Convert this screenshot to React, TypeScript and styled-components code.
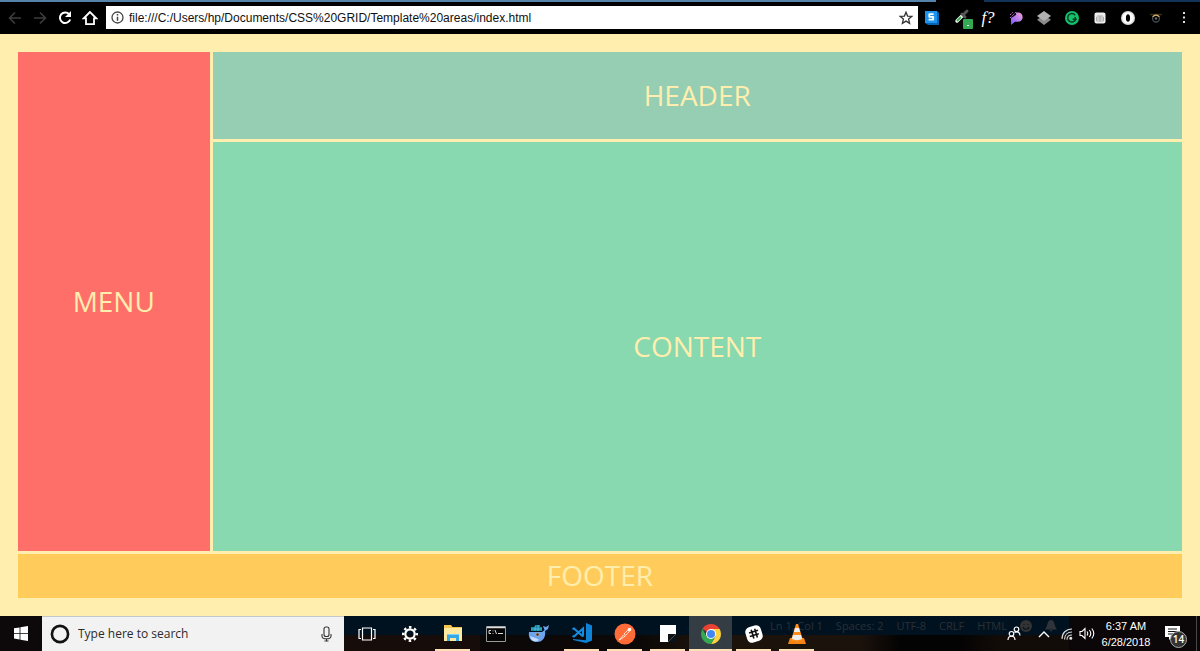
import React from 'react';
import styled, { createGlobalStyle, css } from 'styled-components';

const GlobalStyle = createGlobalStyle`
  *, *::before, *::after { box-sizing: border-box; }
  body { margin: 0; background: #ffeead; font-family: "Open Sans", "Noto Sans", sans-serif; }
  button, input { font: inherit; border: 0; padding: 0; margin: 0; background: none; color: inherit; }
  svg { display: block; }
`;

const Screen = styled.div`
  display: flex;
  flex-direction: column;
  min-height: 100vh;
`;

const TabStrip = styled.div`
  height: 2px;
  background: linear-gradient(90deg, #5682ab 0 78%, #000 78% 82%, #123459 82%);
`;

const Toolbar = styled.header`
  display: flex;
  align-items: center;
  height: 32px;
  padding: 4px 2px 5px;
  background: #000;
`;

const ToolButton = styled.button<{ $width: number }>`
  display: flex;
  flex: none;
  align-items: center;
  justify-content: center;
  width: ${(p) => p.$width}px;
  height: 23px;
`;

const NavButtons = styled.nav`
  display: flex;
  margin-right: 4px;
`;

const Extensions = styled.div`
  display: flex;
`;

const AddressBar = styled.div`
  display: flex;
  flex: 1;
  align-items: center;
  height: 23px;
  padding-left: 5px;
  background: #fff;
  color: #111;
`;

const AddressInput = styled.input`
  flex: 1;
  min-width: 0;
  height: 23px;
  margin-left: 5px;
  font-family: "Liberation Sans", sans-serif;
  font-size: 12px;
  outline: 0;
`;

const FunctionMark = styled.span`
  color: #fff;
  font-family: "Liberation Serif", serif;
  font-size: 17px;
  font-style: italic;
  line-height: 20px;
`;

const Page = styled.main`
  display: grid;
  flex: 1;
  grid-template-columns: repeat(12, 1fr);
  grid-template-rows: 87px 1fr 44px;
  gap: 3px;
  padding: 18px;
  background: #ffeead;
  grid-template-areas:
    "m m h h h h h h h h h h"
    "m m c c c c c c c c c c"
    "f f f f f f f f f f f f";
`;

const Area = styled.section<{ $area: string; $color: string }>`
  display: flex;
  grid-area: ${(p) => p.$area};
  align-items: center;
  justify-content: center;
  padding-bottom: 2px;
  background: ${(p) => p.$color};
  color: #ffeead;
  font-size: 28px;
  font-weight: 500;
  line-height: 36px;
`;

const Taskbar = styled.footer`
  position: relative;
  display: flex;
  height: 35px;
  background:
    linear-gradient(90deg, #0d090b 0 42px, transparent 42px calc(100% - 131px), #0b0708 calc(100% - 131px)),
    linear-gradient(#00121f 0 19px, transparent 19px),
    linear-gradient(90deg, #160c09 0 480px, #0b0807 480px 640px, #1b120c 700px 860px, #040303 900px 960px, #120c08 1000px);
  color: #fff;
`;

const StartButton = styled.button`
  display: flex;
  flex: none;
  align-items: center;
  justify-content: center;
  width: 42px;
`;

const SearchBox = styled.label`
  display: flex;
  flex: none;
  align-items: center;
  width: 302px;
  padding: 0 12px 0 8px;
  border-top: 1px solid #c3c8cc;
  background: #f2f2f2;
  color: #222;
`;

const SearchInput = styled.input`
  flex: 1;
  min-width: 0;
  margin-left: 8px;
  font-size: 12px;
  line-height: 20px;
  outline: 0;
  &::placeholder { color: #2b2b2b; opacity: 1; }
`;

const Apps = styled.nav`
  display: flex;
  z-index: 1;
  margin-left: 1px;
`;

const AppButton = styled.button<{ $open?: boolean; $active?: boolean }>`
  display: flex;
  position: relative;
  align-items: center;
  justify-content: center;
  width: 43px;
  background: ${(p) => (p.$active ? '#343d44' : 'transparent')};
  ${(p) =>
    p.$open &&
    css`
      &::after {
        content: '';
        position: absolute;
        bottom: 0;
        left: ${p.$active ? 0 : 4}px;
        right: ${p.$active ? 0 : 4}px;
        height: 2px;
        background: #ffdfb5;
      }
    `}
`;

const GhostStatus = styled.div`
  position: absolute;
  top: 0;
  right: 143px;
  display: flex;
  align-items: center;
  gap: 13px;
  height: 19px;
  color: #2a3036;
  font-size: 11px;
  white-space: nowrap;
`;

const Tray = styled.div`
  display: flex;
  z-index: 1;
  align-items: center;
  margin-left: auto;
`;

const TrayButton = styled.button<{ $width: number }>`
  display: flex;
  align-items: center;
  justify-content: center;
  width: ${(p) => p.$width}px;
  height: 35px;
`;

const Clock = styled.time`
  width: 58px;
  font-family: "Liberation Sans", sans-serif;
  font-size: 11px;
  line-height: 16px;
  text-align: center;
  white-space: nowrap;
`;

const NotifyButton = styled(TrayButton)`
  position: relative;
  margin-left: 4px;
`;

const ShowDesktop = styled.button`
  width: 4px;
  height: 35px;
  margin-left: 11px;
  border-left: 1px solid #4a4848;
`;

const Badge = styled.span`
  position: absolute;
  right: -2px;
  bottom: 3px;
  width: 17px;
  height: 17px;
  border: 1px solid #aaa;
  border-radius: 50%;
  background: #333;
  font-size: 10px;
  font-weight: 600;
  line-height: 15px;
  text-align: center;
`;

const Back = () => (
  <svg width="14" height="14" viewBox="0 0 14 14" fill="none" stroke="#3d3d3d" strokeWidth="1.6">
    <path d="M13 7H2M7 1.5 1.5 7 7 12.5" />
  </svg>
);
const Forward = () => (
  <svg width="14" height="14" viewBox="0 0 14 14" fill="none" stroke="#3d3d3d" strokeWidth="1.6">
    <path d="M1 7h11M7 1.5 12.5 7 7 12.5" />
  </svg>
);
const Reload = () => (
  <svg width="14" height="14" viewBox="0 0 14 14" fill="none" stroke="#fff" strokeWidth="2">
    <path d="M11.2 3.2A5.3 5.3 0 1 0 12.2 8.5" />
    <path d="M13 0v6H7z" fill="#fff" stroke="none" />
  </svg>
);
const Home = () => (
  <svg width="16" height="16" viewBox="0 0 16 16" fill="none" stroke="#fff" strokeWidth="1.8">
    <path d="M8 2 1.8 8.3H4v5.9h8V8.3h2.2z" />
  </svg>
);
const Info = () => (
  <svg width="13" height="13" viewBox="0 0 13 13" fill="none" stroke="#444" strokeWidth="1.3">
    <circle cx="6.5" cy="6.5" r="5.5" />
    <path d="M6.5 5.7v4M6.5 3v1.5" strokeWidth="1.5" />
  </svg>
);
const Star = () => (
  <svg width="14" height="14" viewBox="0 0 14 14" fill="none" stroke="#333" strokeWidth="1.3">
    <path d="m7 1.2 1.6 3.9 4.2.3-3.2 2.7 1 4.2L7 10.1l-3.6 2.2 1-4.2-3.2-2.7 4.2-.3z" />
  </svg>
);
const Stylish = () => (
  <svg width="14" height="14" viewBox="0 0 14 14">
    <path d="M0 0h12l2 2v12H3l-3-2z" fill="#0a63b0" />
    <path d="M0 0h12v12H0z" fill="#1b95f0" />
    <path d="M8.6 3.2H4.3v2.6h3.9v2.8H3.6" fill="none" stroke="#fff" strokeWidth="1.8" strokeLinejoin="round" />
  </svg>
);
const Dropper = () => (
  <svg width="28" height="23" viewBox="0 0 28 23">
    <path d="m11 15 6-6" stroke="#fff" strokeWidth="3.4" strokeLinecap="round" />
    <path d="m11 15 4-4" stroke="#39a957" strokeWidth="2" />
    <path d="m16 8 3 3M17 9l4-4" stroke="#555" strokeWidth="3" strokeLinecap="round" />
    <rect x="17" y="13" width="10" height="10" rx="1" fill="#34a853" />
    <path d="M21 19h2v1h-2z" fill="#d7f0dc" />
  </svg>
);
const Pixel = () => (
  <svg width="14" height="14" viewBox="0 0 14 14">
    <defs>
      <linearGradient id="violet" x1="0" y1="1" x2="1" y2="0">
        <stop stopColor="#7657ff" />
        <stop offset="1" stopColor="#f7a6d6" />
      </linearGradient>
    </defs>
    <path d="M7 1.5h2a4.6 4.6 0 0 1 0 9.3H6L2 14V7l5-3z" fill="url(#violet)" />
    <path d="m1 4 3-3M1 7l6-6M2 9l6-6" stroke="#c269dc" strokeWidth="1" strokeDasharray="1.5 .8" />
  </svg>
);
const Layers = () => (
  <svg width="16" height="14" viewBox="0 0 16 14">
    <path d="m8 4 7 4.8L8 14 1 8.8z" fill="#8a8a8a" />
    <path d="m8 0 7 5-7 5-7-5z" fill="#b2b2b2" />
  </svg>
);
const Grammar = () => (
  <svg width="14" height="14" viewBox="0 0 14 14" fill="none">
    <circle cx="7" cy="7" r="7" fill="#15c26b" />
    <path d="M10.2 4.2a4.2 4.2 0 1 0 .6 4H7.6M9.8 6l1.2 2.3L9.6 10" stroke="#063d25" strokeWidth="1.5" />
  </svg>
);
const WhiteTile = () => (
  <svg width="12" height="12" viewBox="0 0 12 12" fill="none">
    <rect x=".5" y=".5" width="11" height="11" rx="2" fill="#eee" />
    <path d="M2.5 5h7v4h-7zM6 3v7M3.5 3l1.5 1.5M8.5 3 7 4.5M2.5 7h7" stroke="#aaa" />
  </svg>
);
const Oval = () => (
  <svg width="14" height="14" viewBox="0 0 14 14">
    <circle cx="7" cy="7" r="7" fill="#ddd" />
    <circle cx="7" cy="7" r="5.5" fill="#fff" />
    <ellipse cx="7" cy="7" rx="2.1" ry="3.8" fill="#000" />
  </svg>
);
const Eye = () => (
  <svg width="14" height="12" viewBox="0 0 14 12" fill="none">
    <path d="M1 2.5h12" stroke="#3b2b12" strokeWidth="1.5" />
    <circle cx="7" cy="6.5" r="3.5" stroke="#464c53" strokeWidth="1.3" />
    <path d="M3.8 5a3.7 3.7 0 0 1 6.4 0" stroke="#d4a85b" strokeWidth="1.3" />
    <circle cx="7" cy="6.5" r="1.3" fill="#666" />
  </svg>
);
const More = () => (
  <svg width="4" height="13" viewBox="0 0 4 13" fill="#ddd">
    <path d="M1 1h2v2H1zM1 5.5h2v2H1zM1 10h2v2H1z" />
  </svg>
);
const Windows = () => (
  <svg width="14" height="15" viewBox="0 0 14 15" fill="#fff">
    <path d="m0 2.3 5.6-.9V7H0zM6.4 1.2 14 0v7H6.4zM0 7.8h5.6v5.6L0 12.6zM6.4 7.8H14V15l-7.6-1.3z" />
  </svg>
);
const Cortana = () => (
  <svg width="20" height="20" viewBox="0 0 20 20">
    <circle cx="10" cy="10" r="8.1" fill="none" stroke="#111" strokeWidth="2.6" />
  </svg>
);
const Mic = () => (
  <svg width="11" height="16" viewBox="0 0 11 16" fill="none" stroke="#333" strokeWidth="1.1">
    <rect x="3" y="1" width="5" height="9.5" rx="2" />
    <path d="M1 8v2.2c0 3.4 9 3.4 9 0V8M5.5 12.8V15M3.5 15h4" />
  </svg>
);
const TaskView = () => (
  <svg width="18" height="14" viewBox="0 0 18 14" fill="none" stroke="#fff" strokeWidth="1.2">
    <path d="M4.5 1h9v12h-9zM3 2.5H1v9h2M15 2.5h2v9h-2" />
  </svg>
);
const Gear = () => (
  <svg width="18" height="18" viewBox="0 0 18 18" fill="none" stroke="#fff">
    <circle cx="9" cy="9" r="4.7" strokeWidth="2.2" />
    <circle cx="9" cy="9" r="6.8" strokeWidth="2.4" strokeDasharray="2.5 2.84" strokeDashoffset="1.25" />
  </svg>
);
const Folder = () => (
  <svg width="20" height="17" viewBox="0 0 20 17">
    <path d="M1 0h7l1.5 2H19v14H1z" fill="#f3c64f" />
    <path d="M1 3h18v13H1z" fill="#ffe99e" />
    <path d="M4 16v-7h12v7h-3v-3H7v3z" fill="#35a9e6" />
    <path d="M4 9h12v1H4z" fill="#79d0f5" />
  </svg>
);
const Terminal = () => (
  <svg width="20" height="16" viewBox="0 0 20 16" fill="none">
    <path d="M.5.5h19v15H.5z" fill="#050505" stroke="#999" />
    <path d="M1 1.5h18" stroke="#ddd" strokeWidth="1.5" />
    <path d="M5 4.5H3v3h2M7 4.5v.8M7 7v.8M9 4l1.5 4M12 7.5h5" stroke="#ddd" />
  </svg>
);
const Whale = () => (
  <svg width="21" height="19" viewBox="0 0 21 19">
    <path d="M1 8h13l2.5-2L15 2l3 1 3-2-1 4-3 2c1 6-2 11-8 11C3 18 0 14 1 8z" fill="#6ca5ee" />
    <path d="M2 12c3 2 6 1 9 4-4 3-8 1-9-4z" fill="#c4dcfb" />
    <path d="M3 3h4V1h5v2h2v4H3z" fill="#1683a7" />
    <path d="M3 5h11M7 2v5M10 1v6" stroke="#5fd1dc" strokeWidth=".7" />
    <circle cx="9.5" cy="10.5" r="1.5" fill="#382a24" stroke="#e3ac7c" strokeWidth=".6" />
  </svg>
);
const Code = () => (
  <svg width="22" height="21" viewBox="0 0 22 21" fill="none">
    <path d="m15 0 6 2.5v15L15 20 2 17v-1l13 1.3z" fill="#0d83d8" />
    <path d="M1.5 6.2 3 5.4l9 8.1M1.5 12.8l1.5.8 9-8.1v8" stroke="#168ce0" strokeWidth="2" />
  </svg>
);
const Postman = () => (
  <svg width="22" height="22" viewBox="0 0 22 22" fill="none">
    <circle cx="11" cy="11" r="10.5" fill="#ff6c37" />
    <path d="m5 17 5-5.5 2 1-5 3.5zM10 11l4-4 1.6 1-3.4 4" stroke="#ffe1d2" strokeWidth="1" />
    <circle cx="15.5" cy="6.5" r="1.8" fill="#fff" />
  </svg>
);
const Note = () => (
  <svg width="16" height="17" viewBox="0 0 16 17">
    <path d="M0 0h16v17H0z" fill="#fff" />
    <path d="M8 17V9h8z" fill="#111" />
    <path d="M16 9v8H8z" fill="#08141d" />
  </svg>
);
const Chrome = () => (
  <svg width="20" height="20" viewBox="0 0 20 20">
    <path d="M10 10 1.34 5A10 10 0 0 1 18.66 5z" fill="#e94235" />
    <path d="M10 5h8.66A10 10 0 0 1 10 20l4.4-7.5z" fill="#fdd23e" />
    <path d="M1.34 5A10 10 0 0 0 10 20l4.3-7.5L10 14 5.7 12.5z" fill="#35a852" />
    <circle cx="10" cy="10" r="5" fill="#fff" />
    <circle cx="10" cy="10" r="4" fill="#4285f4" />
  </svg>
);
const Slack = () => (
  <svg width="18" height="18" viewBox="0 0 18 18" fill="none">
    <rect x="2" y="2" width="14" height="14" rx="4" fill="#fff" stroke="#fff" strokeWidth="2" transform="rotate(-17 9 9)" />
    <path d="m6.2 4.8 2.7 8.8m.8-9.9 2.7 8.8M4 8l9-2.8m-8.2 6.4 9-2.8" stroke="#111" strokeWidth="1.6" />
  </svg>
);
const Cone = () => (
  <svg width="18" height="20" viewBox="0 0 18 20">
    <path d="M2 14h14l2 6H0z" fill="#f58212" />
    <path d="M8 0h2l5 16c-2 2-10 2-12 0z" fill="#ff8b19" />
    <path d="M7 4h4l1.2 4H5.8zM5 11h8l1.2 4c-3 1.5-7 1.5-10.4 0z" fill="#eee" />
  </svg>
);
const People = () => (
  <svg width="14" height="15" viewBox="0 0 14 15" fill="none" stroke="#fff" strokeWidth="1.2">
    <circle cx="4.5" cy="7.8" r="2.3" />
    <circle cx="9.5" cy="3.3" r="2.3" />
    <path d="M1 14c0-5 7-5 7 0M7.5 6.5C10 5 13 6 13 9.5" />
  </svg>
);
const Chevron = () => (
  <svg width="12" height="8" viewBox="0 0 12 8" fill="none" stroke="#fff" strokeWidth="1.4">
    <path d="m1 7 5-5 5 5" />
  </svg>
);
const Wifi = () => (
  <svg width="12" height="12" viewBox="0 0 12 12" fill="none" stroke="#ddd" strokeWidth="1.1">
    <path d="M1 11C1 5 5 1 11 1M3.5 11.5c0-4.5 3-7.5 7.5-7.5M6 11.7C6 9 8 7 11 7" />
    <circle cx="9.8" cy="10.3" r="1" fill="#fff" />
  </svg>
);
const Volume = () => (
  <svg width="16" height="13" viewBox="0 0 16 13" fill="none" stroke="#fff" strokeWidth="1.1">
    <path d="M1 4.5h2L6 1.5v10l-3-3H1zM8 4.5q1.5 2 0 4M10.3 3q3 3.5 0 7M12.8 1.5q4 5 0 10" />
  </svg>
);
const Message = () => (
  <svg width="15" height="15" viewBox="0 0 15 15">
    <path d="M0 0h15v11H7l-3 3v-3H0z" fill="#fff" />
    <path d="M3 3h9M3 5.5h9M3 8h6" stroke="#111" />
  </svg>
);
const Smile = () => (
  <svg width="12" height="12" viewBox="0 0 12 12">
    <circle cx="6" cy="6" r="6" fill="#333" />
    <path d="M3.5 4.5h1M7.5 4.5h1M3 7c1 3 5 3 6 0" fill="none" stroke="#06121c" strokeWidth="1.2" />
  </svg>
);
const Bell = () => (
  <svg width="12" height="12" viewBox="0 0 12 12" fill="#30343a">
    <path d="M6 0c4 0 3 6 6 9.5H0C3 6 2 0 6 0zM4.5 10h3L6 12z" />
  </svg>
);

const extensions = [
  { name: 'Stylish', icon: <Stylish /> },
  { name: 'Color picker', icon: <Dropper /> },
  { name: 'WhatFont', icon: <FunctionMark>f?</FunctionMark> },
  { name: 'Page ruler', icon: <Pixel /> },
  { name: 'Layers', icon: <Layers /> },
  { name: 'Grammar', icon: <Grammar /> },
  { name: 'Tiles', icon: <WhiteTile /> },
  { name: 'Oval', icon: <Oval /> },
  { name: 'Viewer', icon: <Eye /> },
  { name: 'Browser menu', icon: <More /> },
];

const apps = [
  { name: 'Task view', icon: <TaskView /> },
  { name: 'Settings', icon: <Gear /> },
  { name: 'File Explorer', icon: <Folder />, open: true },
  { name: 'Command Prompt', icon: <Terminal /> },
  { name: 'Docker', icon: <Whale /> },
  { name: 'Visual Studio Code', icon: <Code />, open: true },
  { name: 'Postman', icon: <Postman />, open: true },
  { name: 'Sticky Notes', icon: <Note />, open: true },
  { name: 'Chrome', icon: <Chrome />, open: true, active: true },
  { name: 'Slack', icon: <Slack />, open: true },
  { name: 'VLC', icon: <Cone />, open: true },
];

export default function App() {
  return (
    <Screen>
      <GlobalStyle />
      <TabStrip />
      <Toolbar>
        <NavButtons>
          <ToolButton $width={25} aria-label="Back"><Back /></ToolButton>
          <ToolButton $width={25} aria-label="Forward"><Forward /></ToolButton>
          <ToolButton $width={25} aria-label="Reload"><Reload /></ToolButton>
          <ToolButton $width={25} aria-label="Home"><Home /></ToolButton>
        </NavButtons>
        <AddressBar>
          <Info />
          <AddressInput
            aria-label="Address"
            defaultValue="file:///C:/Users/hp/Documents/CSS%20GRID/Template%20areas/index.html"
          />
          <ToolButton $width={24} aria-label="Bookmark"><Star /></ToolButton>
        </AddressBar>
        <Extensions>
          {extensions.map((e) => (
            <ToolButton key={e.name} $width={28} aria-label={e.name}>{e.icon}</ToolButton>
          ))}
        </Extensions>
      </Toolbar>

      <Page>
        <Area $area="h" $color="#96ceb4">HEADER</Area>
        <Area $area="m" $color="#ff6f69">MENU</Area>
        <Area $area="c" $color="#88d8b0">CONTENT</Area>
        <Area $area="f" $color="#ffcc5c">FOOTER</Area>
      </Page>

      <Taskbar>
        <GhostStatus>
          <span>Ln 1, Col 1</span>
          <span>Spaces: 2</span>
          <span>UTF-8</span>
          <span>CRLF</span>
          <span>HTML</span>
          <Smile />
          <Bell />
        </GhostStatus>
        <StartButton aria-label="Start"><Windows /></StartButton>
        <SearchBox>
          <Cortana />
          <SearchInput aria-label="Search" placeholder="Type here to search" />
          <Mic />
        </SearchBox>
        <Apps>
          {apps.map((a) => (
            <AppButton key={a.name} $open={a.open} $active={a.active} aria-label={a.name}>{a.icon}</AppButton>
          ))}
        </Apps>
        <Tray>
          <TrayButton $width={34} aria-label="People"><People /></TrayButton>
          <TrayButton $width={26} aria-label="Show hidden icons"><Chevron /></TrayButton>
          <TrayButton $width={20} aria-label="Network"><Wifi /></TrayButton>
          <TrayButton $width={20} aria-label="Volume"><Volume /></TrayButton>
          <Clock>6:37 AM<br />6/28/2018</Clock>
          <NotifyButton $width={26} aria-label="Notifications">
            <Message />
            <Badge>14</Badge>
          </NotifyButton>
          <ShowDesktop aria-label="Show desktop" />
        </Tray>
      </Taskbar>
    </Screen>
  );
}
